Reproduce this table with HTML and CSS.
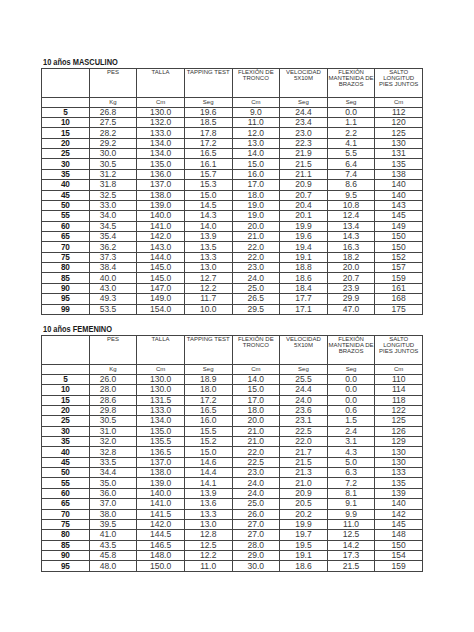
FILE: index.html
```html
<!DOCTYPE html>
<html lang="es">
<head>
<meta charset="utf-8">
<title>10 años</title>
<link rel="stylesheet" href="styles.css">
</head>
<body>
<div class="page">
  <h2 class="title">10 años MASCULINO</h2>
  <table class="grid">
    <colgroup><col><col><col><col><col><col><col><col></colgroup>
    <tr class="head">
      <th></th><th>PES</th><th>TALLA</th><th>TAPPING TEST</th><th>FLEXIÓN DE<br>TRONCO</th><th>VELOCIDAD<br>5X10M</th><th>FLEXIÓN<br>MANTENIDA DE<br>BRAZOS</th><th>SALTO<br>LONGITUD<br>PIES JUNTOS</th>
    </tr>
    <tr class="units"><td></td><td>Kg</td><td>Cm</td><td>Seg</td><td>Cm</td><td>Seg</td><td>Seg</td><td>Cm</td></tr>
    <tr class="row"><th>5</th><td class="pes">26.8</td><td>130.0</td><td>19.6</td><td>9.0</td><td>24.4</td><td>0.0</td><td>112</td></tr>
    <tr class="row"><th>10</th><td class="pes">27.5</td><td>132.0</td><td>18.5</td><td>11.0</td><td>23.4</td><td>1.1</td><td>120</td></tr>
    <tr class="row"><th>15</th><td class="pes">28.2</td><td>133.0</td><td>17.8</td><td>12.0</td><td>23.0</td><td>2.2</td><td>125</td></tr>
    <tr class="row"><th>20</th><td class="pes">29.2</td><td>134.0</td><td>17.2</td><td>13.0</td><td>22.3</td><td>4.1</td><td>130</td></tr>
    <tr class="row"><th>25</th><td class="pes">30.0</td><td>134.0</td><td>16.5</td><td>14.0</td><td>21.9</td><td>5.5</td><td>131</td></tr>
    <tr class="row"><th>30</th><td class="pes">30.5</td><td>135.0</td><td>16.1</td><td>15.0</td><td>21.5</td><td>6.4</td><td>135</td></tr>
    <tr class="row"><th>35</th><td class="pes">31.2</td><td>136.0</td><td>15.7</td><td>16.0</td><td>21.1</td><td>7.4</td><td>138</td></tr>
    <tr class="row"><th>40</th><td class="pes">31.8</td><td>137.0</td><td>15.3</td><td>17.0</td><td>20.9</td><td>8.6</td><td>140</td></tr>
    <tr class="row"><th>45</th><td class="pes">32.5</td><td>138.0</td><td>15.0</td><td>18.0</td><td>20.7</td><td>9.5</td><td>140</td></tr>
    <tr class="row"><th>50</th><td class="pes">33.0</td><td>139.0</td><td>14.5</td><td>19.0</td><td>20.4</td><td>10.8</td><td>143</td></tr>
    <tr class="row"><th>55</th><td class="pes">34.0</td><td>140.0</td><td>14.3</td><td>19.0</td><td>20.1</td><td>12.4</td><td>145</td></tr>
    <tr class="row"><th>60</th><td class="pes">34.5</td><td>141.0</td><td>14.0</td><td>20.0</td><td>19.9</td><td>13.4</td><td>149</td></tr>
    <tr class="row"><th>65</th><td class="pes">35.4</td><td>142.0</td><td>13.9</td><td>21.0</td><td>19.6</td><td>14.3</td><td>150</td></tr>
    <tr class="row"><th>70</th><td class="pes">36.2</td><td>143.0</td><td>13.5</td><td>22.0</td><td>19.4</td><td>16.3</td><td>150</td></tr>
    <tr class="row"><th>75</th><td class="pes">37.3</td><td>144.0</td><td>13.3</td><td>22.0</td><td>19.1</td><td>18.2</td><td>152</td></tr>
    <tr class="row"><th>80</th><td class="pes">38.4</td><td>145.0</td><td>13.0</td><td>23.0</td><td>18.8</td><td>20.0</td><td>157</td></tr>
    <tr class="row"><th>85</th><td class="pes">40.0</td><td>145.0</td><td>12.7</td><td>24.0</td><td>18.6</td><td>20.7</td><td>159</td></tr>
    <tr class="row"><th>90</th><td class="pes">43.0</td><td>147.0</td><td>12.2</td><td>25.0</td><td>18.4</td><td>23.9</td><td>161</td></tr>
    <tr class="row"><th>95</th><td class="pes">49.3</td><td>149.0</td><td>11.7</td><td>26.5</td><td>17.7</td><td>29.9</td><td>168</td></tr>
    <tr class="row"><th>99</th><td class="pes">53.5</td><td>154.0</td><td>10.0</td><td>29.5</td><td>17.1</td><td>47.0</td><td>175</td></tr>
  </table>

  <h2 class="title second">10 años FEMENINO</h2>
  <table class="grid">
    <colgroup><col><col><col><col><col><col><col><col></colgroup>
    <tr class="head">
      <th></th><th>PES</th><th>TALLA</th><th>TAPPING TEST</th><th>FLEXIÓN DE<br>TRONCO</th><th>VELOCIDAD<br>5X10M</th><th>FLEXIÓN<br>MANTENIDA DE<br>BRAZOS</th><th>SALTO<br>LONGITUD<br>PIES JUNTOS</th>
    </tr>
    <tr class="units"><td></td><td>Kg</td><td>Cm</td><td>Seg</td><td>Cm</td><td>Seg</td><td>Seg</td><td>Cm</td></tr>
    <tr class="row"><th>5</th><td class="pes">26.0</td><td>130.0</td><td>18.9</td><td>14.0</td><td>25.5</td><td>0.0</td><td>110</td></tr>
    <tr class="row"><th>10</th><td class="pes">28.0</td><td>130.0</td><td>18.0</td><td>15.0</td><td>24.4</td><td>0.0</td><td>114</td></tr>
    <tr class="row"><th>15</th><td class="pes">28.6</td><td>131.5</td><td>17.2</td><td>17.0</td><td>24.0</td><td>0.0</td><td>118</td></tr>
    <tr class="row"><th>20</th><td class="pes">29.8</td><td>133.0</td><td>16.5</td><td>18.0</td><td>23.6</td><td>0.6</td><td>122</td></tr>
    <tr class="row"><th>25</th><td class="pes">30.5</td><td>134.0</td><td>16.0</td><td>20.0</td><td>23.1</td><td>1.5</td><td>125</td></tr>
    <tr class="row"><th>30</th><td class="pes">31.0</td><td>135.0</td><td>15.5</td><td>21.0</td><td>22.5</td><td>2.4</td><td>126</td></tr>
    <tr class="row"><th>35</th><td class="pes">32.0</td><td>135.5</td><td>15.2</td><td>21.0</td><td>22.0</td><td>3.1</td><td>129</td></tr>
    <tr class="row"><th>40</th><td class="pes">32.8</td><td>136.5</td><td>15.0</td><td>22.0</td><td>21.7</td><td>4.3</td><td>130</td></tr>
    <tr class="row"><th>45</th><td class="pes">33.5</td><td>137.0</td><td>14.6</td><td>22.5</td><td>21.5</td><td>5.0</td><td>130</td></tr>
    <tr class="row"><th>50</th><td class="pes">34.4</td><td>138.0</td><td>14.4</td><td>23.0</td><td>21.3</td><td>6.3</td><td>133</td></tr>
    <tr class="row"><th>55</th><td class="pes">35.0</td><td>139.0</td><td>14.1</td><td>24.0</td><td>21.0</td><td>7.2</td><td>135</td></tr>
    <tr class="row"><th>60</th><td class="pes">36.0</td><td>140.0</td><td>13.9</td><td>24.0</td><td>20.9</td><td>8.1</td><td>139</td></tr>
    <tr class="row"><th>65</th><td class="pes">37.0</td><td>141.0</td><td>13.6</td><td>25.0</td><td>20.5</td><td>9.1</td><td>140</td></tr>
    <tr class="row"><th>70</th><td class="pes">38.0</td><td>141.5</td><td>13.3</td><td>26.0</td><td>20.2</td><td>9.9</td><td>142</td></tr>
    <tr class="row"><th>75</th><td class="pes">39.5</td><td>142.0</td><td>13.0</td><td>27.0</td><td>19.9</td><td>11.0</td><td>145</td></tr>
    <tr class="row"><th>80</th><td class="pes">41.0</td><td>144.5</td><td>12.8</td><td>27.0</td><td>19.7</td><td>12.5</td><td>148</td></tr>
    <tr class="row"><th>85</th><td class="pes">43.5</td><td>146.5</td><td>12.5</td><td>28.0</td><td>19.5</td><td>14.2</td><td>150</td></tr>
    <tr class="row"><th>90</th><td class="pes">45.8</td><td>148.0</td><td>12.2</td><td>29.0</td><td>19.1</td><td>17.3</td><td>154</td></tr>
    <tr class="row"><th>95</th><td class="pes">48.0</td><td>150.0</td><td>11.0</td><td>30.0</td><td>18.6</td><td>21.5</td><td>159</td></tr>
  </table>
</div>
</body>
</html>
```

FILE: styles.css
```css
html, body {
  margin: 0;
  padding: 0;
  background: #ffffff;
}

.page {
  padding: 57px 0 0 41px;
  color: #2a2a2a;
  font-family: "Liberation Sans", Arial, sans-serif;
}

.title {
  margin: 0 0 0.7px 2px;
  font-family: "Liberation Sans", Arial, sans-serif;
  font-size: 9.3px;
  line-height: 10px;
  font-weight: bold;
  color: #1a1a1a;
  white-space: nowrap;
  transform: scaleX(0.8);
  transform-origin: 0 0;
}

.title.second {
  margin-top: 9.3px;
}

.grid {
  border-collapse: collapse;
  table-layout: fixed;
  width: 382px;
  border: 1px solid #3a3a3a;
}

.grid col {
  width: 47.6px;
}

.grid th,
.grid td {
  border: 1px solid #444;
  padding: 0;
  text-align: center;
  overflow: hidden;
  white-space: nowrap;
}

.head {
  height: 29px;
}

.head th {
  vertical-align: top;
  padding-top: 1.5px;
  font-size: 6px;
  line-height: 5.7px;
  font-weight: normal;
  color: #333;
}

.units {
  height: 10px;
}

.units td {
  font-size: 6px;
  line-height: 8px;
  color: #333;
}

.row {
  height: 10.37px;
}

.row td,
.row th {
  line-height: 9px;
}

.row td {
  font-size: 8.5px;
  color: #3a3a3a;
}

.row th {
  font-size: 8.2px;
  font-weight: bold;
  color: #1a1a1a;
  letter-spacing: -0.3px;
}

.row td.pes {
  padding-right: 10px;
}
```
